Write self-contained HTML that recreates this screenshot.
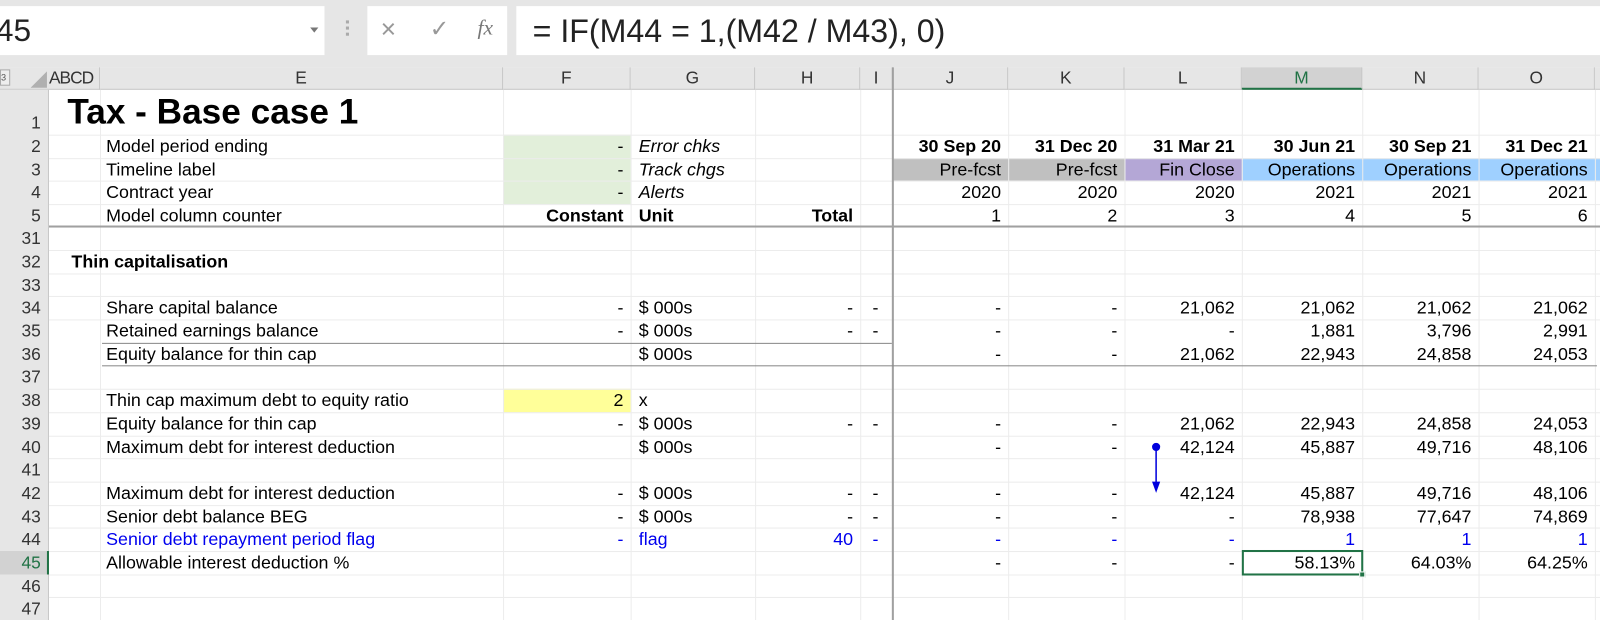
<!DOCTYPE html>
<html><head><meta charset="utf-8"><style>
*{margin:0;padding:0;box-sizing:border-box}
body{width:1600px;height:608px;overflow:hidden;background:#fff;position:relative;font-family:"Liberation Sans",Arial,sans-serif;color:#000}
#w{position:absolute;left:0;top:0;width:1568px;height:596px;transform:scale(1.0204);transform-origin:0 0}
.a{position:absolute}
.c{position:absolute;height:23px;line-height:23px;font-size:17.5px;white-space:nowrap}
.r{text-align:right;padding-right:7px}
.b{font-weight:bold}
.i{font-style:italic}
.bl{color:#0000ee}
.hl{position:absolute;left:48px;width:1552px;height:1px;background:#ececec}
.vl{position:absolute;top:88px;height:520px;width:1px;background:#ececec}
.rn{position:absolute;left:0;width:48px;height:23px;line-height:23px;text-align:right;padding-right:8px;font-size:17px;color:#333}
.ch{position:absolute;top:66px;height:22px;line-height:22px;text-align:center;font-size:17px;color:#333;border-right:1px solid #c8c8c8}
</style></head><body><div id="w">
<div class="a" style="left:0;top:0;width:1600px;height:66px;background:#e6e6e6"></div>
<div class="a" style="left:0;top:6px;width:318px;height:48px;background:#fff"></div>
<div class="a" style="left:-4px;top:12px;font-size:31px;color:#222">45</div>
<div class="a" style="left:304px;top:27px;width:0;height:0;border-left:4px solid transparent;border-right:4px solid transparent;border-top:5px solid #777"></div>
<div class="a" style="left:339px;top:20px;width:3px;height:3px;background:#aaa;box-shadow:0 6px 0 #aaa,0 12px 0 #aaa"></div>
<div class="a" style="left:360px;top:6px;width:137px;height:48px;background:#fff"></div>
<div class="a" style="left:373px;top:13px;font-size:26px;color:#999">×</div>
<div class="a" style="left:421px;top:15px;font-size:23px;color:#999">✓</div>
<div class="a" style="left:468px;top:15px;font-size:21px;color:#777;font-family:'Liberation Serif',serif;font-style:italic">fx</div>
<div class="a" style="left:506px;top:6px;width:1094px;height:48px;background:#fff"></div>
<div class="a" style="left:522px;top:12px;font-size:31.5px;color:#222">= IF(M44 = 1,(M42 / M43), 0)</div>
<div class="a" style="left:0;top:66px;width:1600px;height:22px;background:#e6e6e6;border-bottom:1px solid #c8c8c8"></div>
<div class="a" style="left:0;top:68px;width:10px;height:16px;border:1px solid #aaa;background:#eee;font-size:9px;line-height:14px;color:#555">3</div>
<div class="a" style="left:30px;top:70px;width:0;height:0;border-left:16px solid transparent;border-bottom:16px solid #b0b0b0"></div>
<div class="ch" style="left:48px;width:50px;text-align:left;letter-spacing:-1px">ABCD</div>
<div class="ch" style="left:98px;width:395px">E</div>
<div class="ch" style="left:493px;width:125px">F</div>
<div class="ch" style="left:618px;width:122px">G</div>
<div class="ch" style="left:740px;width:103px">H</div>
<div class="ch" style="left:843px;width:32px">I</div>
<div class="ch" style="left:875px;width:113px">J</div>
<div class="ch" style="left:988px;width:114px">K</div>
<div class="ch" style="left:1102px;width:115px">L</div>
<div class="ch" style="left:1217px;width:118px;background:#d2d2d2;color:#217346;border-bottom:2px solid #217346">M</div>
<div class="ch" style="left:1335px;width:114px">N</div>
<div class="ch" style="left:1449px;width:114px">O</div>
<div class="a" style="left:0;top:88px;width:48px;height:520px;background:#e6e6e6;border-right:1px solid #c8c8c8"></div>
<div class="a" style="left:0;top:540px;width:48px;height:23px;background:#d2d2d2;border-right:2px solid #217346"></div>
<div class="a" style="left:493px;top:132px;width:125px;height:68px;background:#e2efda"></div>
<div class="a" style="left:493px;top:381px;width:125px;height:23px;background:#ffff99"></div>
<div class="a" style="left:875px;top:155px;width:227px;height:22px;background:#c0c0c0"></div>
<div class="a" style="left:1102px;top:155px;width:115px;height:22px;background:#b4a7d6"></div>
<div class="a" style="left:1217px;top:155px;width:383px;height:22px;background:#9fd0ff"></div>
<div class="hl" style="top:132px"></div><div class="hl" style="top:155px"></div><div class="hl" style="top:177px"></div><div class="hl" style="top:200px"></div>
<div class="hl" style="top:245px"></div><div class="hl" style="top:268px"></div><div class="hl" style="top:290px"></div><div class="hl" style="top:313px"></div>
<div class="hl" style="top:381px"></div><div class="hl" style="top:404px"></div><div class="hl" style="top:427px"></div><div class="hl" style="top:449px"></div><div class="hl" style="top:472px"></div><div class="hl" style="top:495px"></div><div class="hl" style="top:517px"></div><div class="hl" style="top:540px"></div><div class="hl" style="top:563px"></div><div class="hl" style="top:585px"></div>
<div class="vl" style="left:98px"></div><div class="vl" style="left:493px"></div><div class="vl" style="left:618px"></div><div class="vl" style="left:740px"></div><div class="vl" style="left:843px"></div><div class="vl" style="left:988px"></div><div class="vl" style="left:1102px"></div><div class="vl" style="left:1217px"></div><div class="vl" style="left:1335px"></div><div class="vl" style="left:1449px"></div><div class="vl" style="left:1563px"></div>
<div class="a" style="left:48px;top:221px;width:1552px;height:2px;background:#a0a0a0"></div>
<div class="a" style="left:874px;top:66px;width:2px;height:542px;background:#a0a0a0"></div>
<div class="a" style="left:100px;top:336px;width:774px;height:1px;background:#888"></div>
<div class="a" style="left:100px;top:358px;width:1465px;height:1px;background:#888"></div>
<div class="rn" style="top:109px">1</div>
<div class="rn" style="top:132px">2</div><div class="rn" style="top:155px">3</div><div class="rn" style="top:177px">4</div><div class="rn" style="top:200px">5</div>
<div class="rn" style="top:222px">31</div><div class="rn" style="top:245px">32</div><div class="rn" style="top:268px">33</div><div class="rn" style="top:290px">34</div><div class="rn" style="top:313px">35</div><div class="rn" style="top:336px">36</div><div class="rn" style="top:358px">37</div><div class="rn" style="top:381px">38</div><div class="rn" style="top:404px">39</div><div class="rn" style="top:427px">40</div><div class="rn" style="top:449px">41</div><div class="rn" style="top:472px">42</div><div class="rn" style="top:495px">43</div><div class="rn" style="top:517px">44</div><div class="rn" style="top:540px;color:#217346">45</div><div class="rn" style="top:563px">46</div><div class="rn" style="top:585px">47</div>
<div class="a b" style="left:66px;top:91px;font-size:34.5px">Tax - Base case 1</div>
<div class="c" style="left:104px;top:132px">Model period ending</div>
<div class="c" style="left:104px;top:155px">Timeline label</div>
<div class="c" style="left:104px;top:177px">Contract year</div>
<div class="c" style="left:104px;top:200px">Model column counter</div>
<div class="c r" style="left:493px;width:125px;top:132px">-</div>
<div class="c r" style="left:493px;width:125px;top:155px">-</div>
<div class="c r" style="left:493px;width:125px;top:177px">-</div>
<div class="c r b" style="left:493px;width:125px;top:200px">Constant</div>
<div class="c i" style="left:626px;top:132px">Error chks</div>
<div class="c i" style="left:626px;top:155px">Track chgs</div>
<div class="c i" style="left:626px;top:177px">Alerts</div>
<div class="c b" style="left:626px;top:200px">Unit</div>
<div class="c r b" style="left:740px;width:103px;top:200px">Total</div>
<div class="c r b" style="left:875px;width:113px;top:132px">30 Sep 20</div>
<div class="c r b" style="left:988px;width:114px;top:132px">31 Dec 20</div>
<div class="c r b" style="left:1102px;width:115px;top:132px">31 Mar 21</div>
<div class="c r b" style="left:1217px;width:118px;top:132px">30 Jun 21</div>
<div class="c r b" style="left:1335px;width:114px;top:132px">30 Sep 21</div>
<div class="c r b" style="left:1449px;width:114px;top:132px">31 Dec 21</div>
<div class="c r" style="left:875px;width:113px;top:155px">Pre-fcst</div>
<div class="c r" style="left:988px;width:114px;top:155px">Pre-fcst</div>
<div class="c r" style="left:1102px;width:115px;top:155px">Fin Close</div>
<div class="c r" style="left:1217px;width:118px;top:155px">Operations</div>
<div class="c r" style="left:1335px;width:114px;top:155px">Operations</div>
<div class="c r" style="left:1449px;width:114px;top:155px">Operations</div>
<div class="c r" style="left:875px;width:113px;top:177px">2020</div>
<div class="c r" style="left:988px;width:114px;top:177px">2020</div>
<div class="c r" style="left:1102px;width:115px;top:177px">2020</div>
<div class="c r" style="left:1217px;width:118px;top:177px">2021</div>
<div class="c r" style="left:1335px;width:114px;top:177px">2021</div>
<div class="c r" style="left:1449px;width:114px;top:177px">2021</div>
<div class="c r" style="left:875px;width:113px;top:200px">1</div>
<div class="c r" style="left:988px;width:114px;top:200px">2</div>
<div class="c r" style="left:1102px;width:115px;top:200px">3</div>
<div class="c r" style="left:1217px;width:118px;top:200px">4</div>
<div class="c r" style="left:1335px;width:114px;top:200px">5</div>
<div class="c r" style="left:1449px;width:114px;top:200px">6</div>
<div class="c b" style="left:70px;top:245px">Thin capitalisation</div>
<div class="c" style="left:104px;top:290px">Share capital balance</div>
<div class="c r" style="left:493px;width:125px;top:290px">-</div>
<div class="c" style="left:626px;top:290px">$ 000s</div>
<div class="c r" style="left:740px;width:103px;top:290px">-</div>
<div class="c" style="left:855px;top:290px">-</div>
<div class="c r" style="left:875px;width:113px;top:290px">-</div>
<div class="c r" style="left:988px;width:114px;top:290px">-</div>
<div class="c r" style="left:1102px;width:115px;top:290px">21,062</div>
<div class="c r" style="left:1217px;width:118px;top:290px">21,062</div>
<div class="c r" style="left:1335px;width:114px;top:290px">21,062</div>
<div class="c r" style="left:1449px;width:114px;top:290px">21,062</div>
<div class="c" style="left:104px;top:313px">Retained earnings balance</div>
<div class="c r" style="left:493px;width:125px;top:313px">-</div>
<div class="c" style="left:626px;top:313px">$ 000s</div>
<div class="c r" style="left:740px;width:103px;top:313px">-</div>
<div class="c" style="left:855px;top:313px">-</div>
<div class="c r" style="left:875px;width:113px;top:313px">-</div>
<div class="c r" style="left:988px;width:114px;top:313px">-</div>
<div class="c r" style="left:1102px;width:115px;top:313px">-</div>
<div class="c r" style="left:1217px;width:118px;top:313px">1,881</div>
<div class="c r" style="left:1335px;width:114px;top:313px">3,796</div>
<div class="c r" style="left:1449px;width:114px;top:313px">2,991</div>
<div class="c" style="left:104px;top:336px">Equity balance for thin cap</div>
<div class="c" style="left:626px;top:336px">$ 000s</div>
<div class="c r" style="left:875px;width:113px;top:336px">-</div>
<div class="c r" style="left:988px;width:114px;top:336px">-</div>
<div class="c r" style="left:1102px;width:115px;top:336px">21,062</div>
<div class="c r" style="left:1217px;width:118px;top:336px">22,943</div>
<div class="c r" style="left:1335px;width:114px;top:336px">24,858</div>
<div class="c r" style="left:1449px;width:114px;top:336px">24,053</div>
<div class="c" style="left:104px;top:381px">Thin cap maximum debt to equity ratio</div>
<div class="c r" style="left:493px;width:125px;top:381px">2</div>
<div class="c" style="left:626px;top:381px">x</div>
<div class="c" style="left:104px;top:404px">Equity balance for thin cap</div>
<div class="c r" style="left:493px;width:125px;top:404px">-</div>
<div class="c" style="left:626px;top:404px">$ 000s</div>
<div class="c r" style="left:740px;width:103px;top:404px">-</div>
<div class="c" style="left:855px;top:404px">-</div>
<div class="c r" style="left:875px;width:113px;top:404px">-</div>
<div class="c r" style="left:988px;width:114px;top:404px">-</div>
<div class="c r" style="left:1102px;width:115px;top:404px">21,062</div>
<div class="c r" style="left:1217px;width:118px;top:404px">22,943</div>
<div class="c r" style="left:1335px;width:114px;top:404px">24,858</div>
<div class="c r" style="left:1449px;width:114px;top:404px">24,053</div>
<div class="c" style="left:104px;top:427px">Maximum debt for interest deduction</div>
<div class="c" style="left:626px;top:427px">$ 000s</div>
<div class="c r" style="left:875px;width:113px;top:427px">-</div>
<div class="c r" style="left:988px;width:114px;top:427px">-</div>
<div class="c r" style="left:1102px;width:115px;top:427px">42,124</div>
<div class="c r" style="left:1217px;width:118px;top:427px">45,887</div>
<div class="c r" style="left:1335px;width:114px;top:427px">49,716</div>
<div class="c r" style="left:1449px;width:114px;top:427px">48,106</div>
<svg class="a" style="left:1124px;top:430px" width="20" height="56"><circle cx="9" cy="8" r="4" fill="#0000dd"/><line x1="9" y1="8" x2="9" y2="45" stroke="#0000dd" stroke-width="1.5"/><polygon points="5,42 13,42 9,53" fill="#0000dd"/></svg>
<div class="c" style="left:104px;top:472px">Maximum debt for interest deduction</div>
<div class="c r" style="left:493px;width:125px;top:472px">-</div>
<div class="c" style="left:626px;top:472px">$ 000s</div>
<div class="c r" style="left:740px;width:103px;top:472px">-</div>
<div class="c" style="left:855px;top:472px">-</div>
<div class="c r" style="left:875px;width:113px;top:472px">-</div>
<div class="c r" style="left:988px;width:114px;top:472px">-</div>
<div class="c r" style="left:1102px;width:115px;top:472px">42,124</div>
<div class="c r" style="left:1217px;width:118px;top:472px">45,887</div>
<div class="c r" style="left:1335px;width:114px;top:472px">49,716</div>
<div class="c r" style="left:1449px;width:114px;top:472px">48,106</div>
<div class="c" style="left:104px;top:495px">Senior debt balance BEG</div>
<div class="c r" style="left:493px;width:125px;top:495px">-</div>
<div class="c" style="left:626px;top:495px">$ 000s</div>
<div class="c r" style="left:740px;width:103px;top:495px">-</div>
<div class="c" style="left:855px;top:495px">-</div>
<div class="c r" style="left:875px;width:113px;top:495px">-</div>
<div class="c r" style="left:988px;width:114px;top:495px">-</div>
<div class="c r" style="left:1102px;width:115px;top:495px">-</div>
<div class="c r" style="left:1217px;width:118px;top:495px">78,938</div>
<div class="c r" style="left:1335px;width:114px;top:495px">77,647</div>
<div class="c r" style="left:1449px;width:114px;top:495px">74,869</div>
<div class="c bl" style="left:104px;top:517px">Senior debt repayment period flag</div>
<div class="c r bl" style="left:493px;width:125px;top:517px">-</div>
<div class="c bl" style="left:626px;top:517px">flag</div>
<div class="c r bl" style="left:740px;width:103px;top:517px">40</div>
<div class="c bl" style="left:855px;top:517px">-</div>
<div class="c r bl" style="left:875px;width:113px;top:517px">-</div>
<div class="c r bl" style="left:988px;width:114px;top:517px">-</div>
<div class="c r bl" style="left:1102px;width:115px;top:517px">-</div>
<div class="c r bl" style="left:1217px;width:118px;top:517px">1</div>
<div class="c r bl" style="left:1335px;width:114px;top:517px">1</div>
<div class="c r bl" style="left:1449px;width:114px;top:517px">1</div>
<div class="c" style="left:104px;top:540px">Allowable interest deduction %</div>
<div class="c r" style="left:875px;width:113px;top:540px">-</div>
<div class="c r" style="left:988px;width:114px;top:540px">-</div>
<div class="c r" style="left:1102px;width:115px;top:540px">-</div>
<div class="a" style="left:1217px;top:539px;width:119px;height:25px;border:2px solid #217346"></div>
<div class="a" style="left:1332px;top:560px;width:6px;height:6px;background:#217346;border:1px solid #fff"></div>
<div class="c r" style="left:1217px;width:118px;top:540px">58.13%</div>
<div class="c r" style="left:1335px;width:114px;top:540px">64.03%</div>
<div class="c r" style="left:1449px;width:114px;top:540px">64.25%</div>
</div></body></html>
